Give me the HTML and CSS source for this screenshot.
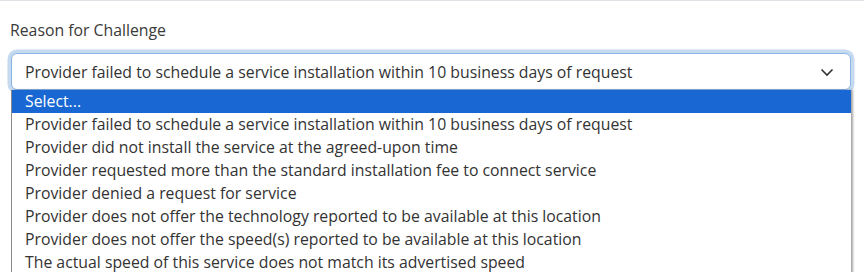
FILE: index.html
```html
<!DOCTYPE html>
<html>
<head>
<meta charset="utf-8">
<link rel="stylesheet" href="styles.css">
</head>
<body>
<div class="page">
  <label class="label">Reason for Challenge</label>
  <div class="field">
    <div class="select">
      <span class="value">Provider failed to schedule a service installation within 10 business days of request</span>
      <svg class="chev" width="14" height="10" viewBox="0 0 14 10"><path d="M1.5 2.5 L7 8 L12.5 2.5" fill="none" stroke="#333" stroke-width="1.6"/></svg>
    </div>
    <ul class="list">
      <li class="opt selected">Select...</li>
      <li class="opt">Provider failed to schedule a service installation within 10 business days of request</li>
      <li class="opt">Provider did not install the service at the agreed-upon time</li>
      <li class="opt">Provider requested more than the standard installation fee to connect service</li>
      <li class="opt">Provider denied a request for service</li>
      <li class="opt">Provider does not offer the technology reported to be available at this location</li>
      <li class="opt">Provider does not offer the speed(s) reported to be available at this location</li>
      <li class="opt">The actual speed of this service does not match its advertised speed</li>
    </ul>
  </div>
</div>
</body>
</html>
```
FILE: styles.css
```css
html, body { margin: 0; padding: 0; background: #fff; }
body { font-family: "Open Sans", "Noto Sans", sans-serif; color: #333; overflow: hidden; height: 272px; }
.page { border-top: 1px solid #dee2e6; padding: 19px 13px 0 10px; }
.label { display: block; font-size: 15.8px; line-height: 20px; color: #3a3a3a; margin-bottom: 13px; }
.field { position: relative; }
.select {
  display: flex; align-items: center; justify-content: space-between;
  height: 37px; box-sizing: border-box; margin-left: 1px;
  border: 1px solid #8bb5e6; border-radius: 6px;
  box-shadow: 0 0 0 3.5px #c6daef;
  padding: 0 16px 0 13px; background: #fff;
}
.value { font-size: 15.8px; color: #333; }
.chev { display: block; }
.list {
  list-style: none; margin: 0 0 0 1px; padding: 0;
  position: absolute; left: 0; right: 0; top: 37px;
  background: #fff; border-left: 1px solid #8a8a8a;
  box-shadow: 2px 0 2px rgba(0,0,0,.35);
}
.opt { font-size: 15.8px; line-height: 23px; height: 23px; padding-left: 13px; color: #333; white-space: nowrap; }
.opt.selected { background: #1967d2; color: #fff; }
```
